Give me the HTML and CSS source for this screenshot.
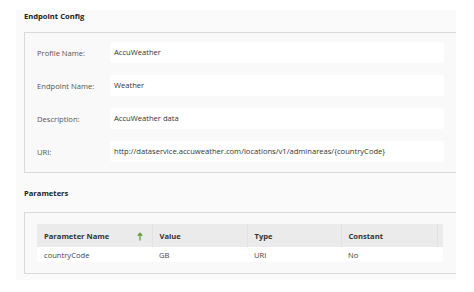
FILE: index.html
```html
<!DOCTYPE html>
<html lang="en">
<head>
    <meta charset="UTF-8">
    <title>Endpoint Config</title>
    <link rel="stylesheet" href="styles.css">
</head>
<body>
    <div class="panel">
        <h2 class="title">Endpoint Config</h2>
        <div class="box config">
            <div class="row">
                <label>Profile Name:</label>
                <div class="field">AccuWeather</div>
            </div>
            <div class="row">
                <label>Endpoint Name:</label>
                <div class="field">Weather</div>
            </div>
            <div class="row">
                <label>Description:</label>
                <div class="field">AccuWeather data</div>
            </div>
            <div class="row">
                <label>URI:</label>
                <div class="field">http://dataservice.accuweather.com/locations/v1/adminareas/{countryCode}</div>
            </div>
        </div>
        <h2 class="title params-title">Parameters</h2>
        <div class="box params">
            <table>
                <thead>
                    <tr>
                        <th class="c-name">Parameter Name
                            <svg class="sort" width="6" height="9" viewBox="0 0 6 9">
                                <path d="M3 8.5V1.5M0.8 3.8L3 1.3L5.2 3.8" fill="none" stroke="#5aa03c" stroke-width="1.3"/>
                            </svg>
                        </th>
                        <th class="c-value">Value</th>
                        <th class="c-type">Type</th>
                        <th class="c-const">Constant</th>
                        <th class="c-end"></th>
                    </tr>
                </thead>
                <tbody>
                    <tr>
                        <td>countryCode</td>
                        <td>GB</td>
                        <td>URI</td>
                        <td>No</td>
                        <td></td>
                    </tr>
                </tbody>
            </table>
        </div>
    </div>
</body>
</html>
```

FILE: styles.css
```css
*{
    margin: 0;
    padding: 0;
    box-sizing: border-box;
}
body{
    background: #ffffff;
    font-family: "Open Sans", "Liberation Sans", sans-serif;
    font-size: 7.6px;
    color: #444;
}
.panel{
    margin: 10px 0 0 16px;
    width: 440px;
    background: #fafafa;
    padding-bottom: 6px;
}
.title{
    font-size: 7.6px;
    font-weight: bold;
    color: #222;
    padding: 1px 8px 0;
    height: 22px;
    line-height: 10px;
}
.params-title{
    height: 39px;
    padding-top: 15px;
}
.box{
    margin-left: 8px;
    border: 1px solid #dadada;
    border-right: none;
    background: #f9f9f9;
}
.config{
    display: flex;
    flex-direction: column;
    gap: 12px;
    padding: 9px 12px 10px 12px;
}
.row{
    display: flex;
    align-items: center;
    height: 21px;
}
.row label{
    width: 73px;
    color: #555;
}
.field{
    flex: 1;
    height: 21px;
    line-height: 21px;
    background: #ffffff;
    border-radius: 3px;
    padding: 0 4px;
    color: #333;
    white-space: nowrap;
}
.params{
    padding: 11px 12px 11px 12px;
}
table{
    width: 406px;
    border-collapse: collapse;
    table-layout: fixed;
}
th{
    background: #ebebeb;
    height: 23px;
    text-align: left;
    font-weight: bold;
    color: #333;
    padding: 0 7px;
    border-left: 1px solid #e2e2e2;
}
th:first-child{
    border-left: none;
}
td{
    background: #ffffff;
    height: 15px;
    padding: 0 7px;
    color: #444;
}
.c-name{
    width: 115px;
    position: relative;
}
.c-value{
    width: 95px;
}
.c-type{
    width: 94px;
}
.c-const{
    width: 96px;
}
.c-end{
    width: 6px;
    padding: 0;
}
.sort{
    position: absolute;
    right: 9px;
    top: 8px;
}
```
